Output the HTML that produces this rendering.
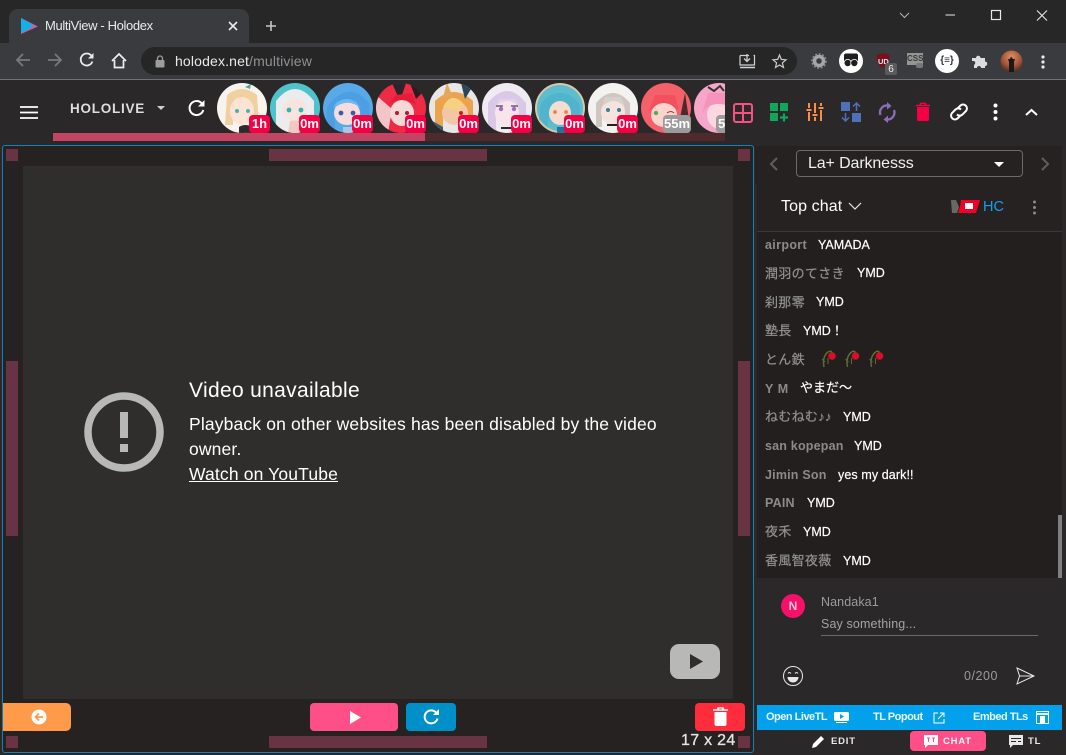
<!DOCTYPE html>
<html><head><meta charset="utf-8"><title>MultiView - Holodex</title>
<style>
html,body{margin:0;padding:0;width:1066px;height:755px;overflow:hidden;background:#2a2828}
body{position:relative;font-family:"Liberation Sans","Noto Sans CJK JP",sans-serif;color:#fff}
.a,.t{position:absolute}
.t{white-space:nowrap;line-height:1}
svg{position:absolute;overflow:visible}
.bd{position:absolute;top:115px;height:18px;border-radius:4px;background:#f50045;color:#fff;font-size:13px;font-weight:bold;line-height:18px;text-align:center;width:21px}
.n{position:absolute;left:765px;font-size:12.5px;font-weight:bold;color:#8b8b8b;white-space:nowrap;line-height:16px}
.c{font-weight:normal;font-size:13px;letter-spacing:.3px;color:#929292;-webkit-text-stroke:.2px #929292}
.m{position:absolute;font-size:12.5px;color:#fff;white-space:nowrap;line-height:16px;-webkit-text-stroke:.2px #fff}
.s{position:absolute;background:#683342}
</style></head><body>

<!-- Browser chrome -->
<div class="a" style="left:0;top:0;width:1066px;height:43px;background:#282727"></div>
<div class="a" style="left:9px;top:9px;width:240px;height:34px;background:#393b3e;border-radius:9px 9px 0 0"></div>
<svg style="left:20px;top:17px" width="18" height="18"><path d="M1 1 L18 9.5 L1 17Z" fill="#f0508a"/><path d="M1 1 L15 9 L1 16Z" fill="#14b0e8"/></svg>
<div class="t" style="left:45px;top:19px;font-size:13px;color:#e8eaed;letter-spacing:-.36px">MultiView - Holodex</div>
<svg style="left:227px;top:20px" width="12" height="12"><path d="M2 2L10 10M10 2L2 10" stroke="#e8eaed" stroke-width="1.6"/></svg>
<svg style="left:264px;top:19px" width="14" height="14"><path d="M7 2V12M2 7H12" stroke="#c4c7c9" stroke-width="1.6"/></svg>
<svg style="left:899px;top:10px" width="12" height="10"><path d="M1 3L5.500 7.500L10 3" stroke="#b4b4b4" fill="none"/></svg>
<svg style="left:945px;top:10px" width="100" height="12"><path d="M0.5 5H10" stroke="#e8e8e8"/><rect x="46.5" y="0.5" width="9" height="9" fill="none" stroke="#e8e8e8" stroke-width="1.2"/><path d="M92 0.5L102 10.5M102 0.5L92 10.5" stroke="#e8e8e8" stroke-width="1.1"/></svg>

<div class="a" style="left:0;top:43px;width:1066px;height:36px;background:#393b3e"></div>
<div class="a" style="left:0;top:79px;width:1066px;height:1px;background:#717171"></div>
<svg style="left:15px;top:52px" width="16" height="16"><path d="M15 8H2M8 2L2 8L8 14" stroke="#77797c" stroke-width="1.8" fill="none"/></svg>
<svg style="left:47px;top:52px" width="16" height="16"><path d="M1 8H14M8 2L14 8L8 14" stroke="#77797c" stroke-width="1.8" fill="none"/></svg>
<svg style="left:79px;top:52px" width="16" height="16"><path d="M13.4 9.5A6 6 0 1 1 12.6 4" stroke="#e8eaed" stroke-width="1.8" fill="none"/><path d="M14.5 1V6.5H9Z" fill="#e8eaed"/></svg>
<svg style="left:110px;top:52px" width="18" height="17"><path d="M2 9L9 2L16 9M4.5 8V15.5H13.5V8" stroke="#eceef0" stroke-width="1.7" fill="none"/></svg>
<div class="a" style="left:141px;top:47px;width:656px;height:28px;background:#262626;border-radius:14px"></div>
<svg style="left:155px;top:55px" width="10" height="13"><rect x="0.5" y="5" width="9" height="7.5" rx="1" fill="#9a9c9e"/><path d="M2.5 5V3.5a2.5 2.5 0 0 1 5 0V5" stroke="#9a9c9e" fill="none" stroke-width="1.3"/></svg>
<div class="t" style="left:175px;top:54px;font-size:14px;color:#e8eaed;letter-spacing:.15px">holodex.net<span style="color:#8d9195">/multiview</span></div>
<svg style="left:739px;top:54px" width="18" height="16"><path d="M1 1.5H10M14.5 1.5H15.5V11H1V1.5" stroke="#cfd1d3" stroke-width="1.2" fill="none"/><path d="M8 0V7M5 4.5L8 7.5L11 4.5" stroke="#cfd1d3" stroke-width="1.3" fill="none"/><path d="M1 13.5H16" stroke="#cfd1d3" stroke-width="1.5"/></svg>
<svg style="left:772px;top:54px" width="15" height="15"><path d="M7.5 1L9.3 5.4L14 5.8L10.4 8.8L11.5 13.5L7.5 11L3.5 13.5L4.6 8.8L1 5.8L5.7 5.4Z" stroke="#c8cacc" stroke-width="1.2" fill="none"/></svg>
<svg style="left:811px;top:53px" width="16" height="16"><circle cx="8" cy="8" r="4.5" fill="none" stroke="#a6a6a6" stroke-width="3.5"/><circle cx="8" cy="8" r="7" fill="none" stroke="#8c8c8c" stroke-width="1.6" stroke-dasharray="2 1.6"/></svg>
<div class="a" style="left:839px;top:49px;width:24px;height:24px;border-radius:50%;background:#fff"></div>
<svg style="left:843px;top:53px" width="16" height="16"><path d="M1 2.500Q1 0.500 3 0.500H13Q15 0.500 15 2.500V9H1Z" fill="#1e1e1e"/><circle cx="4.700" cy="10" r="3.600" fill="#1e1e1e" stroke="#fff" stroke-width=".8"/><circle cx="11.300" cy="10" r="3.600" fill="#1e1e1e" stroke="#fff" stroke-width=".8"/></svg>
<svg style="left:876px;top:53px" width="14" height="15"><path d="M0.500 2L7 0L13.500 2C13.500 8 12 12.500 7 15C2 12.500 0.500 8 0.500 2Z" fill="#7d0f1c"/></svg>
<div class="t" style="left:878px;top:58px;font-size:7.5px;font-weight:bold;color:#e8e8e8">UD</div>
<div class="a" style="left:885px;top:63px;width:12px;height:12px;background:#5b5b5b;border-radius:2px;font-size:10px;line-height:13px;text-align:center;color:#eee">6</div>
<div class="a" style="left:907px;top:53px;width:16px;height:12px;background:#959595;font-size:8px;font-weight:bold;line-height:12px;text-align:center;color:#3b3b3b">CSS</div>
<div class="a" style="left:916px;top:63px;width:7px;height:5px;background:#777;border-radius:2px"></div>
<div class="a" style="left:935px;top:49px;width:24px;height:24px;border-radius:50%;background:#fff;color:#333;font-size:10px;font-weight:bold;line-height:23px;text-align:center">{≡}</div>
<svg style="left:971px;top:53px" width="16" height="16"><path d="M1 5H5A2.2 2.2 0 0 1 9.5 5H14V8.5A2.2 2.2 0 0 1 14 13V15H10A2 2 0 0 0 6 15H3V12A2.2 2.2 0 0 0 3 8H1Z" fill="#dcdde0"/></svg>
<svg style="left:1000px;top:50px" width="23" height="23"><defs><radialGradient id="pf" cx="50%" cy="30%" r="70%"><stop offset="0" stop-color="#e09060"/><stop offset=".6" stop-color="#a2553a"/><stop offset="1" stop-color="#4a2c28"/></radialGradient></defs><circle cx="11.5" cy="11.5" r="11" fill="url(#pf)"/><path d="M9 22V12L8 9H10L11 6.5L13 9H15L14 12V22Z" fill="#1c1718"/></svg>
<svg style="left:1041px;top:55px" width="4" height="14"><circle cx="2" cy="2" r="1.6" fill="#e8eaed"/><circle cx="2" cy="7" r="1.6" fill="#e8eaed"/><circle cx="2" cy="12" r="1.6" fill="#e8eaed"/></svg>

<!-- App bar -->
<svg style="left:20px;top:106px" width="18" height="13"><path d="M0 1H18M0 6.5H18M0 12H18" stroke="#fff" stroke-width="1.8"/></svg>
<div class="t" style="left:70px;top:102px;font-size:13.5px;font-weight:bold;letter-spacing:.75px;color:#dedede">HOLOLIVE</div>
<svg style="left:157px;top:106px" width="9" height="5"><path d="M0 0H8L4 4Z" fill="#d0d0d0"/></svg>
<svg style="left:188px;top:99px" width="18" height="18"><path d="M15.3 11A7 7 0 1 1 13.8 4.4" stroke="#fff" stroke-width="2" fill="none"/><path d="M16.5 1V7.5H10Z" fill="#fff"/></svg>

<div class="a" style="left:53px;top:133px;width:672px;height:8px;background:#4e2a2d"></div>
<div class="a" style="left:53px;top:133px;width:372px;height:8px;background:#c44464"></div>

<!-- Avatars -->
<svg style="left:217px;top:83px" width="50" height="50" viewBox="0 0 50 50"><clipPath id="c1"><circle cx="25" cy="25" r="25"/></clipPath><g clip-path="url(#c1)"><rect width="50" height="50" fill="#f7f3ef"/><path d="M10 12Q25 0 40 12L42 42H34V28Q25 24 16 28V42H8Z" fill="#f1d0a0"/><ellipse cx="25" cy="28" rx="12" ry="14" fill="#fbe3d6"/><circle cx="20" cy="28" r="2" fill="#4ab3a8"/><circle cx="31" cy="28" r="2" fill="#4ab3a8"/><path d="M28 4L34 1L33 6Z" fill="#57a59a"/><path d="M22 44Q28 40 36 44V50H22Z" fill="#2c2a2a"/></g></svg>
<svg style="left:270px;top:83px" width="50" height="50" viewBox="0 0 50 50"><clipPath id="c2"><circle cx="25" cy="25" r="25"/></clipPath><g clip-path="url(#c2)"><rect width="50" height="50" fill="#4fc3cc"/><path d="M6 50V18Q25 -6 44 18V50Z" fill="#ecebee"/><ellipse cx="25" cy="27" rx="12" ry="11" fill="#f9e3de"/><circle cx="19" cy="27" r="2.4" fill="#2fb6b0"/><circle cx="31" cy="27" r="2.4" fill="#2fb6b0"/><path d="M20 38Q30 36 36 42V50H18Z" fill="#f2c8c0"/></g></svg>
<svg style="left:323px;top:83px" width="50" height="50" viewBox="0 0 50 50"><clipPath id="c3"><circle cx="25" cy="25" r="25"/></clipPath><g clip-path="url(#c3)"><rect width="50" height="50" fill="#57a9e8"/><path d="M4 24Q25 -4 46 20L48 50H38V28H12V50H3Z" fill="#4c9fe3"/><ellipse cx="24" cy="30" rx="13" ry="12" fill="#f7dcdd"/><path d="M10 26Q24 14 38 25L34 20Q24 12 13 20Z" fill="#6cb9ef"/><circle cx="18" cy="30" r="2.4" fill="#3a5dab"/><circle cx="30" cy="30" r="2.4" fill="#3a5dab"/><path d="M20 44H38V50H20Z" fill="#a8c8e6"/></g></svg>
<svg style="left:376px;top:83px" width="50" height="50" viewBox="0 0 50 50"><clipPath id="c4"><circle cx="25" cy="25" r="25"/></clipPath><g clip-path="url(#c4)"><rect width="50" height="50" fill="#ee2a45"/><path d="M0 12L16 26L12 50H0Z" fill="#f4c4c8"/><path d="M16 0L24 18L30 0Z" fill="#28262a"/><path d="M34 0L40 16L50 6V0Z" fill="#2a1d22"/><ellipse cx="26" cy="30" rx="12" ry="13" fill="#f6d8d6"/><path d="M12 22Q26 12 40 22L36 10L20 12Z" fill="#e81b38"/><circle cx="21" cy="30" r="2" fill="#b11d2c"/><circle cx="31" cy="30" r="2" fill="#b11d2c"/></g></svg>
<svg style="left:429px;top:83px" width="50" height="50" viewBox="0 0 50 50"><clipPath id="c5"><circle cx="25" cy="25" r="25"/></clipPath><g clip-path="url(#c5)"><rect width="50" height="50" fill="#e8e6e6"/><path d="M6 50V18Q25 0 44 18V50H36V30H14V50Z" fill="#eba44c"/><path d="M18 0L24 14L14 14Z" fill="#e6a75a"/><path d="M32 0L42 6L36 16Z" fill="#284660"/><ellipse cx="26" cy="30" rx="13" ry="12" fill="#f4c6a8"/><path d="M14 24Q22 8 34 20L30 28Z" fill="#f6d181"/><circle cx="32" cy="30" r="2" fill="#c82018"/><path d="M0 36L14 44V50H0Z" fill="#2f5d78"/></g></svg>
<svg style="left:482px;top:83px" width="50" height="50" viewBox="0 0 50 50"><clipPath id="c6"><circle cx="25" cy="25" r="25"/></clipPath><g clip-path="url(#c6)"><rect width="50" height="50" fill="#f0eaf2"/><path d="M6 50V20Q25 -4 44 20V50H36V28H14V50Z" fill="#d9c8e6"/><ellipse cx="25" cy="30" rx="12" ry="13" fill="#f7e5ea"/><path d="M13 24Q25 12 38 24L33 16H17Z" fill="#e2d2ec"/><circle cx="19" cy="26" r="2.2" fill="#a768d6"/><circle cx="32" cy="26" r="2.2" fill="#a768d6"/><path d="M14 23H21M29 23H36" stroke="#222" stroke-width="1"/><path d="M19 45H31" stroke="#2d2a26" stroke-width="2"/></g></svg>
<svg style="left:535px;top:83px" width="50" height="50" viewBox="0 0 50 50"><clipPath id="c7"><circle cx="25" cy="25" r="25"/></clipPath><g clip-path="url(#c7)"><rect width="50" height="50" fill="#d5c9a8"/><circle cx="25" cy="25" r="23" fill="#5cbcd0"/><path d="M6 20Q25 0 44 20L46 40H36L32 22H16L12 44L4 36Z" fill="#4fb4cc"/><ellipse cx="25" cy="30" rx="11" ry="12" fill="#f6dcd0"/><circle cx="20" cy="29" r="1.9" fill="#d49034"/><circle cx="31" cy="29" r="1.9" fill="#d49034"/><path d="M22 44L30 44L30 50L22 50Z" fill="#2b6fa0"/></g></svg>
<svg style="left:588px;top:83px" width="50" height="50" viewBox="0 0 50 50"><clipPath id="c8"><circle cx="25" cy="25" r="25"/></clipPath><g clip-path="url(#c8)"><rect width="50" height="50" fill="#f4f2f1"/><path d="M8 44V20Q25 0 42 20V44H36V26H14V44Z" fill="#cfc6c2"/><ellipse cx="25" cy="29" rx="12" ry="13" fill="#f5e4dd"/><path d="M14 24Q25 12 37 24L33 14H17Z" fill="#d8d0cc"/><circle cx="20" cy="27" r="2" fill="#3f7f8e"/><circle cx="31" cy="27" r="2" fill="#3f7f8e"/><path d="M19 42H32" stroke="#26201e" stroke-width="2"/></g></svg>
<svg style="left:641px;top:83px" width="50" height="50" viewBox="0 0 50 50"><clipPath id="c9"><circle cx="25" cy="25" r="25"/></clipPath><g clip-path="url(#c9)"><rect width="50" height="50" fill="#f4616b"/><path d="M44 10L50 50H36Z" fill="#4a2b2a"/><path d="M0 30L6 50H0Z" fill="#4a2b2a"/><ellipse cx="23" cy="32" rx="13" ry="12" fill="#fbd5cd"/><path d="M8 28Q22 12 38 28L34 12L14 12Z" fill="#f2505f"/><circle cx="15" cy="30" r="2.2" fill="#5ca858"/><path d="M26 30Q30 27 33 30" stroke="#a33" fill="none"/></g></svg>
<div class="a" style="left:694px;top:83px;width:31px;height:50px;overflow:hidden"><svg width="50" height="50" viewBox="0 0 50 50" style="left:0;top:0"><clipPath id="c10"><circle cx="25" cy="25" r="25"/></clipPath><g clip-path="url(#c10)"><rect width="50" height="50" fill="#f6a6c8"/><path d="M14 4L20 8L26 3L30 8" stroke="#333" stroke-width="2" fill="none"/><ellipse cx="26" cy="32" rx="13" ry="14" fill="#fbd8e0"/><path d="M8 30Q20 14 40 26L34 10H14Z" fill="#f693bc"/></g></svg></div>
<div class="bd" style="left:249px">1h</div>
<div class="bd" style="left:299px">0m</div>
<div class="bd" style="left:352px">0m</div>
<div class="bd" style="left:405px">0m</div>
<div class="bd" style="left:458px">0m</div>
<div class="bd" style="left:511px">0m</div>
<div class="bd" style="left:564px">0m</div>
<div class="bd" style="left:617px">0m</div>
<div class="bd" style="left:663px;width:28px;background:#9b9b9b">55m</div>
<div class="a" style="left:716px;top:115px;width:9px;height:18px;background:#9b9b9b;border-radius:4px 0 0 4px;overflow:hidden;font-size:13px;font-weight:bold;line-height:18px;padding-left:2px;box-sizing:border-box">5</div>

<!-- Toolbar icons -->
<svg style="left:733px;top:102px" width="20" height="20"><rect x="1" y="2" width="18" height="18" rx="2" fill="none" stroke="#f75083" stroke-width="2"/><path d="M10 2V20M1 11H19" stroke="#f75083" stroke-width="2"/></svg>
<svg style="left:770px;top:102px" width="20" height="20"><path d="M0 1H8V9H0ZM10 1H18V9H10ZM0 11H8V19H0Z" fill="#0fa75c"/><path d="M14 11.500V19.500M10 15.500H18" stroke="#0fa75c" stroke-width="2.200"/></svg>
<svg style="left:806px;top:102px" width="18" height="20"><g stroke="#ff8c41" stroke-width="2" fill="none"><path d="M3 1V6M3 10V19M0.500 8H5.500"/><path d="M9 1V11M9 15V19M6.500 13H11.500"/><path d="M15 1V4M15 8V19M12.500 6H17.500"/></g></svg>
<svg style="left:841px;top:102px" width="21" height="20"><path d="M0 0H9V9H0ZM11 11H20V20H11Z" fill="#4f71b9"/><path d="M15.500 9V1M12 4.500L15.500 1L19 4.500M4.500 11V19M1 15.500L4.500 19L8 15.500" stroke="#4f71b9" stroke-width="1.500" fill="none"/></svg>
<svg style="left:879px;top:102px" width="17" height="21"><g stroke="#8d6cb8" stroke-width="2.300" fill="none"><path d="M1.500 13A7 7 0 0 1 9 3.500"/><path d="M15 8A7 7 0 0 1 8 17.500"/></g><path d="M8 0L12.500 4L8 7.500ZM9 13.500L4.500 17.500L9 21Z" fill="#8d6cb8"/></svg>
<svg style="left:916px;top:103px" width="14" height="18"><path d="M0 2.500H14M4.500 2V0.500H9.500V2" stroke="#f50045" stroke-width="1.500"/><path d="M1 4H13V16.500A1.500 1.500 0 0 1 11.500 18H2.500A1.500 1.500 0 0 1 1 16.500Z" fill="#f50045"/></svg>
<svg style="left:949px;top:102px" width="20" height="20"><g stroke="#fff" stroke-width="2" fill="none"><path d="M8.500 6.500L11.500 3.500A3.900 3.900 0 0 1 17 9L13.500 12.500A3.900 3.900 0 0 1 8 12.500"/><path d="M11.500 13.500L8.500 16.500A3.900 3.900 0 0 1 3 11L6.500 7.500A3.900 3.900 0 0 1 12 7.500"/></g></svg>
<svg style="left:993px;top:103px" width="5" height="18"><circle cx="2.500" cy="2.500" r="2" fill="#fff"/><circle cx="2.500" cy="9" r="2" fill="#fff"/><circle cx="2.500" cy="15.500" r="2" fill="#fff"/></svg>
<svg style="left:1025px;top:108px" width="13" height="9"><path d="M1 7L6.500 2L12 7" stroke="#fff" stroke-width="2" fill="none"/></svg>

<!-- Main frame -->
<div class="a" style="left:0;top:143px;width:1066px;height:612px;background:#2a2828"></div>
<div class="a" style="left:2px;top:145px;width:752px;height:608px;box-sizing:border-box;border:1px solid #1283b8;border-radius:3px;background:#262221"></div>
<div class="a" style="left:23px;top:166px;width:710px;height:533px;background:#2f2e2c"></div>
<div class="s" style="left:6px;top:149px;width:12px;height:12px"></div>
<div class="s" style="left:269px;top:149px;width:218px;height:12px"></div>
<div class="s" style="left:738px;top:149px;width:12px;height:12px"></div>
<div class="s" style="left:6px;top:361px;width:12px;height:175px"></div>
<div class="s" style="left:738px;top:361px;width:12px;height:175px"></div>
<div class="s" style="left:6px;top:736px;width:12px;height:12px"></div>
<div class="s" style="left:269px;top:736px;width:218px;height:12px"></div>
<div class="s" style="left:738px;top:736px;width:12px;height:12px"></div>

<!-- Video error -->
<svg style="left:84px;top:392px" width="80" height="80"><circle cx="40" cy="40" r="36" fill="none" stroke="#b8b8b6" stroke-width="7.500"/><rect x="36" y="20" width="8" height="26" fill="#b8b8b6"/><rect x="36" y="52" width="8" height="8" fill="#b8b8b6"/></svg>
<div class="t" style="left:189px;top:380px;font-size:21px;color:#fff;letter-spacing:.33px">Video unavailable</div>
<div class="t" style="left:189px;top:416px;font-size:17.500px;color:#fff;letter-spacing:.15px">Playback on other websites has been disabled by the video</div>
<div class="t" style="left:189px;top:441px;font-size:17.500px;color:#fff;letter-spacing:.15px">owner.</div>
<div class="t" style="left:189px;top:466px;font-size:17.500px;color:#fff;text-decoration:underline;letter-spacing:.15px">Watch on YouTube</div>
<div class="a" style="left:670px;top:644px;width:50px;height:35px;background:#b8b8b6;border-radius:9px"></div>
<svg style="left:690px;top:654px" width="14" height="15"><path d="M0 0L13 7.500L0 15Z" fill="#2f2e2c"/></svg>

<!-- Bottom buttons -->
<div class="a" style="left:3px;top:703px;width:68px;height:28px;background:#ff9a4a;border-radius:0 5px 5px 0"></div>
<svg style="left:31px;top:709px" width="16" height="16"><circle cx="8" cy="8" r="7.500" fill="#fff"/><path d="M12 8H5M8 4.500L4.500 8L8 11.500" stroke="#ff9a4a" stroke-width="1.800" fill="none"/></svg>
<div class="a" style="left:310px;top:703px;width:88px;height:28px;background:#ff4f89;border-radius:4px"></div>
<svg style="left:350px;top:711px" width="11" height="13"><path d="M0 0L11 6.500L0 13Z" fill="#fff"/></svg>
<div class="a" style="left:406px;top:703px;width:50px;height:28px;background:#0090c9;border-radius:4px"></div>
<svg style="left:423px;top:708px" width="17" height="17"><path d="M14.500 10.500A6.500 6.500 0 1 1 13 4.500" stroke="#fff" stroke-width="2" fill="none"/><path d="M16 1V7H10Z" fill="#fff"/></svg>
<div class="a" style="left:695px;top:703px;width:50px;height:28px;background:#ff2c3b;border-radius:4px"></div>
<svg style="left:713px;top:707px" width="15" height="19"><path d="M0 3H15M5 2.500V1H10V2.500" stroke="#fff" stroke-width="1.500"/><path d="M1.500 5H13.500V17A1.800 1.800 0 0 1 11.700 19H3.300A1.800 1.800 0 0 1 1.500 17Z" fill="#fff"/></svg>
<div class="t" style="left:681px;top:733px;font-size:16px;color:#e4e4e4;letter-spacing:.3px;-webkit-text-stroke:.3px #e4e4e4">17 x 24</div>

<!-- Chat panel -->
<div class="a" style="left:755px;top:146px;width:307px;height:606px;background:#2a2828"></div>
<div class="a" style="left:755px;top:146px;width:307px;height:38px;background:#262221"></div>
<svg style="left:769px;top:157px" width="9" height="14"><path d="M8 1L2 7L8 13" stroke="#5e5e5e" stroke-width="2" fill="none"/></svg>
<svg style="left:1041px;top:157px" width="9" height="14"><path d="M1 1L7 7L1 13" stroke="#5e5e5e" stroke-width="2" fill="none"/></svg>
<div class="a" style="left:796px;top:150px;width:227px;height:27px;box-sizing:border-box;border:1px solid #6a6a6a;border-radius:4px"></div>
<div class="t" style="left:808px;top:156px;font-size:16px;color:#f0f0f0;letter-spacing:-.12px">La+ Darknesss</div>
<svg style="left:994px;top:162px" width="11" height="6"><path d="M0 0H10L5 5Z" fill="#fff"/></svg>

<div class="a" style="left:757px;top:184px;width:305px;height:48px;background:#262221;border-bottom:1px solid #3a3838;box-sizing:border-box"></div>
<div class="t" style="left:781px;top:199px;font-size:16px;color:#fff;letter-spacing:.1px">Top chat</div>
<svg style="left:848px;top:202px" width="14" height="9"><path d="M1 1L7 7L13 1" stroke="#e8e8e8" stroke-width="1.200" fill="none"/></svg>
<svg style="left:951px;top:199px" width="30" height="16"><path d="M0 1H5L8 8L6 14H1Z" fill="#6a6866"/><path d="M10 1H29L25 14H7L9 8Z" fill="#f50024"/><rect x="14" y="4" width="8" height="6" fill="#fff"/></svg>
<div class="t" style="left:983px;top:200px;font-size:14.500px;color:#13a0f0">HC</div>
<svg style="left:1033px;top:200px" width="3" height="15"><circle cx="1.500" cy="2" r="1.500" fill="#8a8a8a"/><circle cx="1.500" cy="7.500" r="1.500" fill="#8a8a8a"/><circle cx="1.500" cy="13" r="1.500" fill="#8a8a8a"/></svg>

<div class="a" style="left:757px;top:232px;width:305px;height:346px;background:#231f1e"></div>
<div class="a" style="left:1058px;top:515px;width:4px;height:63px;background:#808080"></div>

<div class="n" style="top:237px;letter-spacing:.35px">airport</div><div class="m" style="left:818px;top:237px">YAMADA</div>
<div class="n c" style="top:266px">潤羽のてさき</div><div class="m" style="left:857px;top:265px">YMD</div>
<div class="n c" style="top:295px">刹那零</div><div class="m" style="left:816px;top:294px">YMD</div>
<div class="n c" style="top:323px">塾長</div><div class="m" style="left:803px;top:323px">YMD！</div>
<div class="n c" style="top:352px">とん鉄</div>
<svg style="left:821px;top:349px" width="66" height="19"><g id="r"><path d="M3 18Q1 8 7 3Q10 1 11 4" stroke="#5d6b3a" stroke-width="1.500" fill="none"/><circle cx="11" cy="7" r="3.800" fill="#d90f28"/><path d="M1 10L4 13M7 9V15" stroke="#5d6b3a"/></g><use href="#r" x="23.500"/><use href="#r" x="47.500"/></svg>
<div class="n" style="top:381px;letter-spacing:.6px">Y M</div><div class="m" style="left:800px;top:380px;font-size:13px">やまだ～</div>
<div class="n c" style="top:409px">ねむねむ♪♪</div><div class="m" style="left:843px;top:409px">YMD</div>
<div class="n" style="top:438px;letter-spacing:.2px">san kopepan</div><div class="m" style="left:854px;top:438px">YMD</div>
<div class="n" style="top:467px;letter-spacing:.2px">Jimin Son</div><div class="m" style="left:838px;top:467px;letter-spacing:.1px">yes my dark!!</div>
<div class="n" style="top:495px;letter-spacing:.2px">PAIN</div><div class="m" style="left:807px;top:495px">YMD</div>
<div class="n c" style="top:524px">夜禾</div><div class="m" style="left:803px;top:524px">YMD</div>
<div class="n c" style="top:553px">香風智夜薇</div><div class="m" style="left:843px;top:553px">YMD</div>

<div class="a" style="left:781px;top:594px;width:24px;height:24px;border-radius:50%;background:#f5106a;font-size:12px;font-weight:bold;line-height:25px;text-align:center;color:#f4c4d8">N</div>
<div class="t" style="left:821px;top:596px;font-size:12.500px;color:#9b9b9b;letter-spacing:.1px">Nandaka1</div>
<div class="t" style="left:821px;top:618px;font-size:12.500px;color:#a4a4a4;letter-spacing:.13px">Say something...</div>
<div class="a" style="left:821px;top:635px;width:217px;height:1px;background:#6a6a6a"></div>
<svg style="left:783px;top:666px" width="20" height="20"><circle cx="10" cy="10" r="9.500" fill="none" stroke="#e8e8e8" stroke-width="1"/><path d="M4.500 11H15.500A5.500 5.500 0 0 1 4.500 11Z" fill="#e8e8e8"/><path d="M5 7.500Q6.500 5.500 8 7.500M12 7.500Q13.500 5.500 15 7.500" stroke="#e8e8e8" fill="none"/></svg>
<div class="t" style="left:964px;top:670px;font-size:12.500px;color:#9b9b9b;letter-spacing:.55px">0/200</div>
<svg style="left:1016px;top:667px" width="19" height="18"><path d="M1 1L18 9L1 17L3.500 9Z M3.500 9H18" stroke="#e8e8e8" stroke-width="1" fill="none"/></svg>

<div class="a" style="left:757px;top:705px;width:305px;height:25px;background:#03a0ec"></div>
<div class="t" style="left:766px;top:712px;font-size:11px;font-weight:bold;color:#e6f6ff;letter-spacing:-.5px">Open LiveTL</div>
<svg style="left:834px;top:712px" width="15" height="11"><rect width="15" height="9" rx="1.500" fill="#fff"/><path d="M6 2L10 4.500L6 7Z" fill="#03a0ec"/><path d="M2 10.500H13" stroke="#fff"/></svg>
<div class="t" style="left:873px;top:712px;font-size:11px;font-weight:bold;color:#e6f6ff;letter-spacing:-.5px">TL Popout</div>
<svg style="left:933px;top:712px" width="12" height="12"><path d="M5 1H1V11H11V7M7 1H11V5M11 1L5 7" stroke="#fff" fill="none"/></svg>
<div class="t" style="left:973px;top:712px;font-size:11px;font-weight:bold;color:#e6f6ff;letter-spacing:-.5px">Embed TLs</div>
<svg style="left:1036px;top:711px" width="13" height="13"><rect x=".5" y=".5" width="12" height="12" fill="none" stroke="#fff"/><path d="M.5 3H12.500" stroke="#fff" stroke-width="2"/><rect x="4" y="5" width="5" height="8" fill="#fff"/></svg>

<svg style="left:812px;top:735px" width="13" height="13"><path d="M0 13L1 9L9 1L12 4L4 12Z" fill="#fff"/></svg>
<div class="t" style="left:831px;top:737px;font-size:9.500px;font-weight:bold;letter-spacing:.8px;color:#e8e8e8">EDIT</div>
<div class="a" style="left:910px;top:731px;width:76px;height:20px;background:#ff4f89;border-radius:4px"></div>
<svg style="left:924px;top:735px" width="14" height="13"><path d="M0 0H14V10H4L1 13V10H0Z" fill="#fff"/><path d="M3 3H6M4.500 3V7M8 3H11M9.500 3V7" stroke="#ff4f89"/></svg>
<div class="t" style="left:943px;top:737px;font-size:9.500px;font-weight:bold;letter-spacing:.8px;color:#f4f4f4">CHAT</div>
<svg style="left:1009px;top:735px" width="14" height="13"><path d="M0 0H14V10H4L1 13V10H0Z" fill="#e8e8e8"/><path d="M2 3.500H12M2 6.500H7M9 6.500H12" stroke="#2a2828"/></svg>
<div class="t" style="left:1028px;top:737px;font-size:9.500px;font-weight:bold;letter-spacing:.8px;color:#e8e8e8">TL</div>
</body></html>
